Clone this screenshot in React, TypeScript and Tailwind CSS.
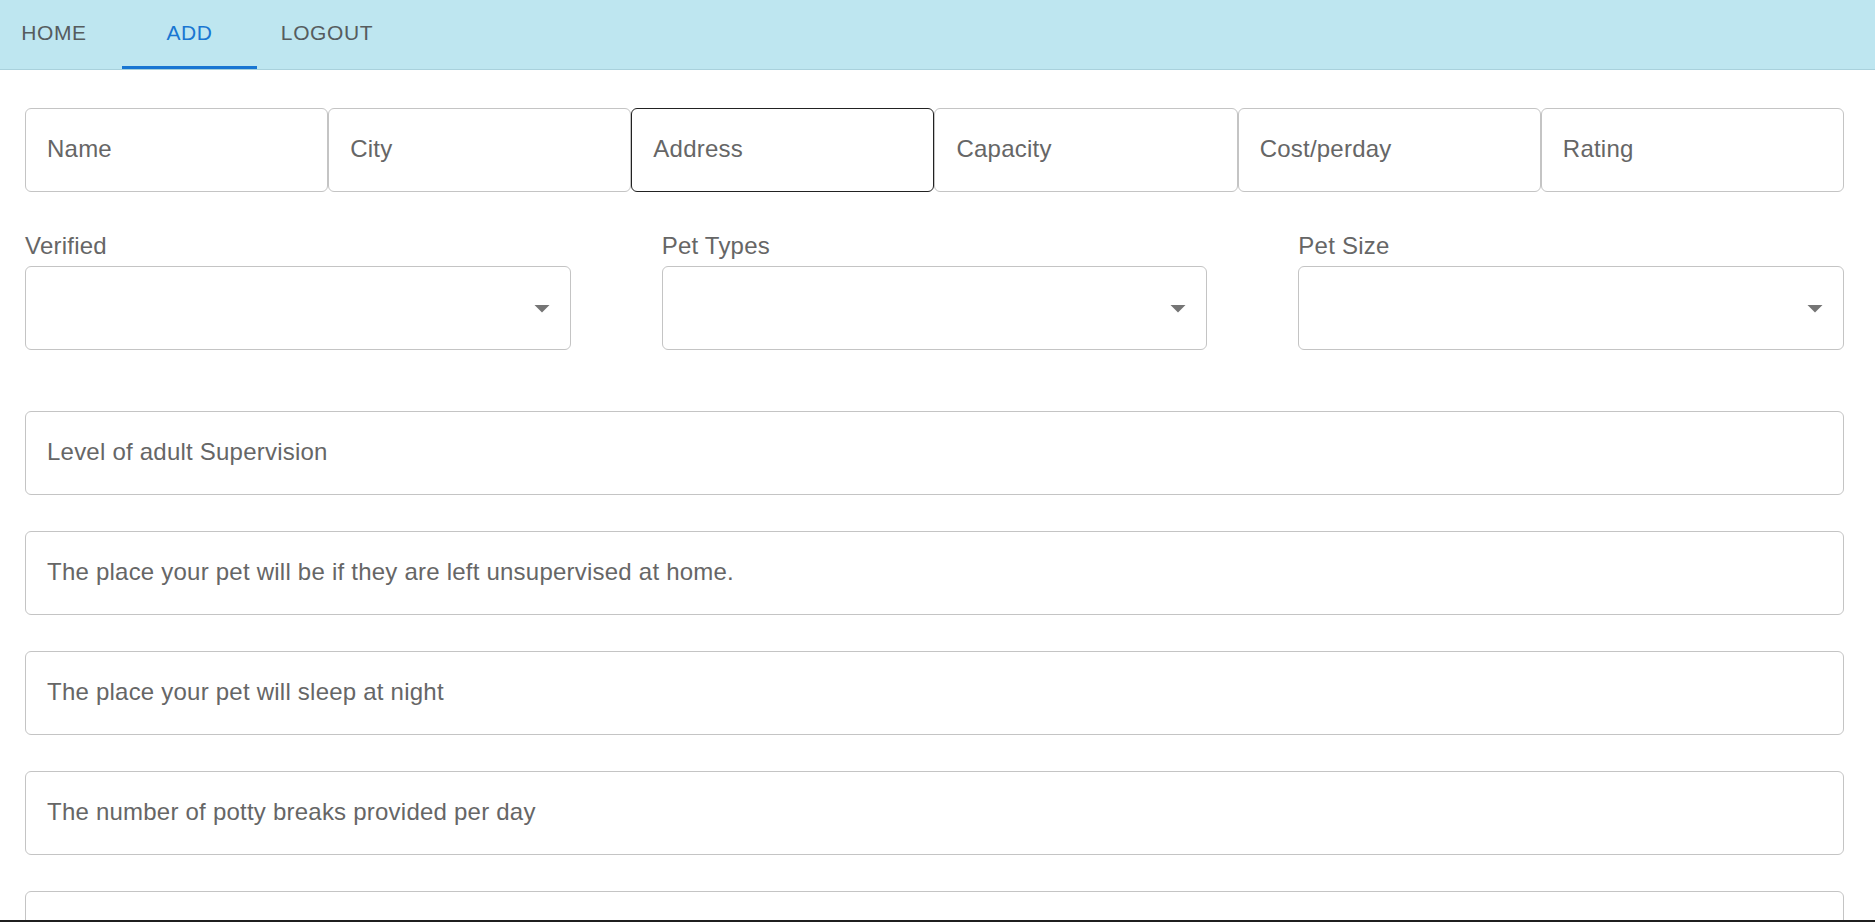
import React from "react";

const tabs = [
  { label: "HOME", width: "w-[108px]", active: false },
  { label: "ADD", width: "w-[135px] ml-[14px]", active: true },
  { label: "LOGOUT", width: "w-[140px]", active: false },
];

const topFields = ["Name", "City", "Address", "Capacity", "Cost/perday", "Rating"];
const selects = ["Verified", "Pet Types", "Pet Size"];
const longFields = [
  "Level of adult Supervision",
  "The place your pet will be if they are left unsupervised at home.",
  "The place your pet will sleep at night",
  "The number of potty breaks provided per day",
  "",
];

function ArrowDrop() {
  return (
    <svg viewBox="0 0 24 24" className="w-[36px] h-[36px] fill-[#757575]">
      <path d="M7 10l5 5 5-5z" />
    </svg>
  );
}

export default function App() {
  return (
    <div className="h-screen overflow-hidden bg-white border-b-2 border-[#1f1f1f] font-['Liberation_Sans',Arial,sans-serif]">
      {/* Nav */}
      <header className="h-[70px] bg-[#bee6f0] border-b border-[#a9d1dc] flex">
        {tabs.map((t) => (
          <div
            key={t.label}
            className={`${t.width} h-[69px] relative flex items-center justify-center text-[21px] leading-none tracking-[0.6px] ${
              t.active ? "text-[#1976d2]" : "text-[#565c5e]"
            }`}
          >
            <span className="pb-[4px]">{t.label}</span>
            {t.active && <div className="absolute left-0 right-0 bottom-0 h-[3px] bg-[#1976d2]" />}
          </div>
        ))}
      </header>

      {/* Form */}
      <main className="pl-[25px] pr-[31px] pt-[38px]">
        <div className="grid grid-cols-6">
          {topFields.map((f) => (
            <div
              key={f}
              className={`h-[84px] rounded-[6px] border flex items-center pl-[21px] pb-[2px] text-[24px] tracking-[0.00938em] text-[#666666] ${
                f === "Address" ? "border-[#222222]" : "border-[#c4c4c4]"
              }`}
            >
              {f}
            </div>
          ))}
        </div>

        <div className="grid grid-cols-3 gap-x-[91px] mt-[40px]">
          {selects.map((s) => (
            <div key={s}>
              <div className="text-[24px] leading-[28px] tracking-[0.00938em] text-[#666666] mb-[6px]">{s}</div>
              <div className="h-[84px] rounded-[6px] border border-[#c4c4c4] relative flex items-center justify-end pr-[10px]">
                <ArrowDrop />
              </div>
            </div>
          ))}
        </div>

        <div className="flex flex-col gap-[36px] mt-[61px]">
          {longFields.map((f, i) => (
            <div
              key={i}
              className="h-[84px] shrink-0 rounded-[6px] border border-[#c4c4c4] flex items-center pl-[21px] pb-[2px] text-[24px] tracking-[0.00938em] text-[#666666]"
            >
              {f}
            </div>
          ))}
        </div>
      </main>
    </div>
  );
}
